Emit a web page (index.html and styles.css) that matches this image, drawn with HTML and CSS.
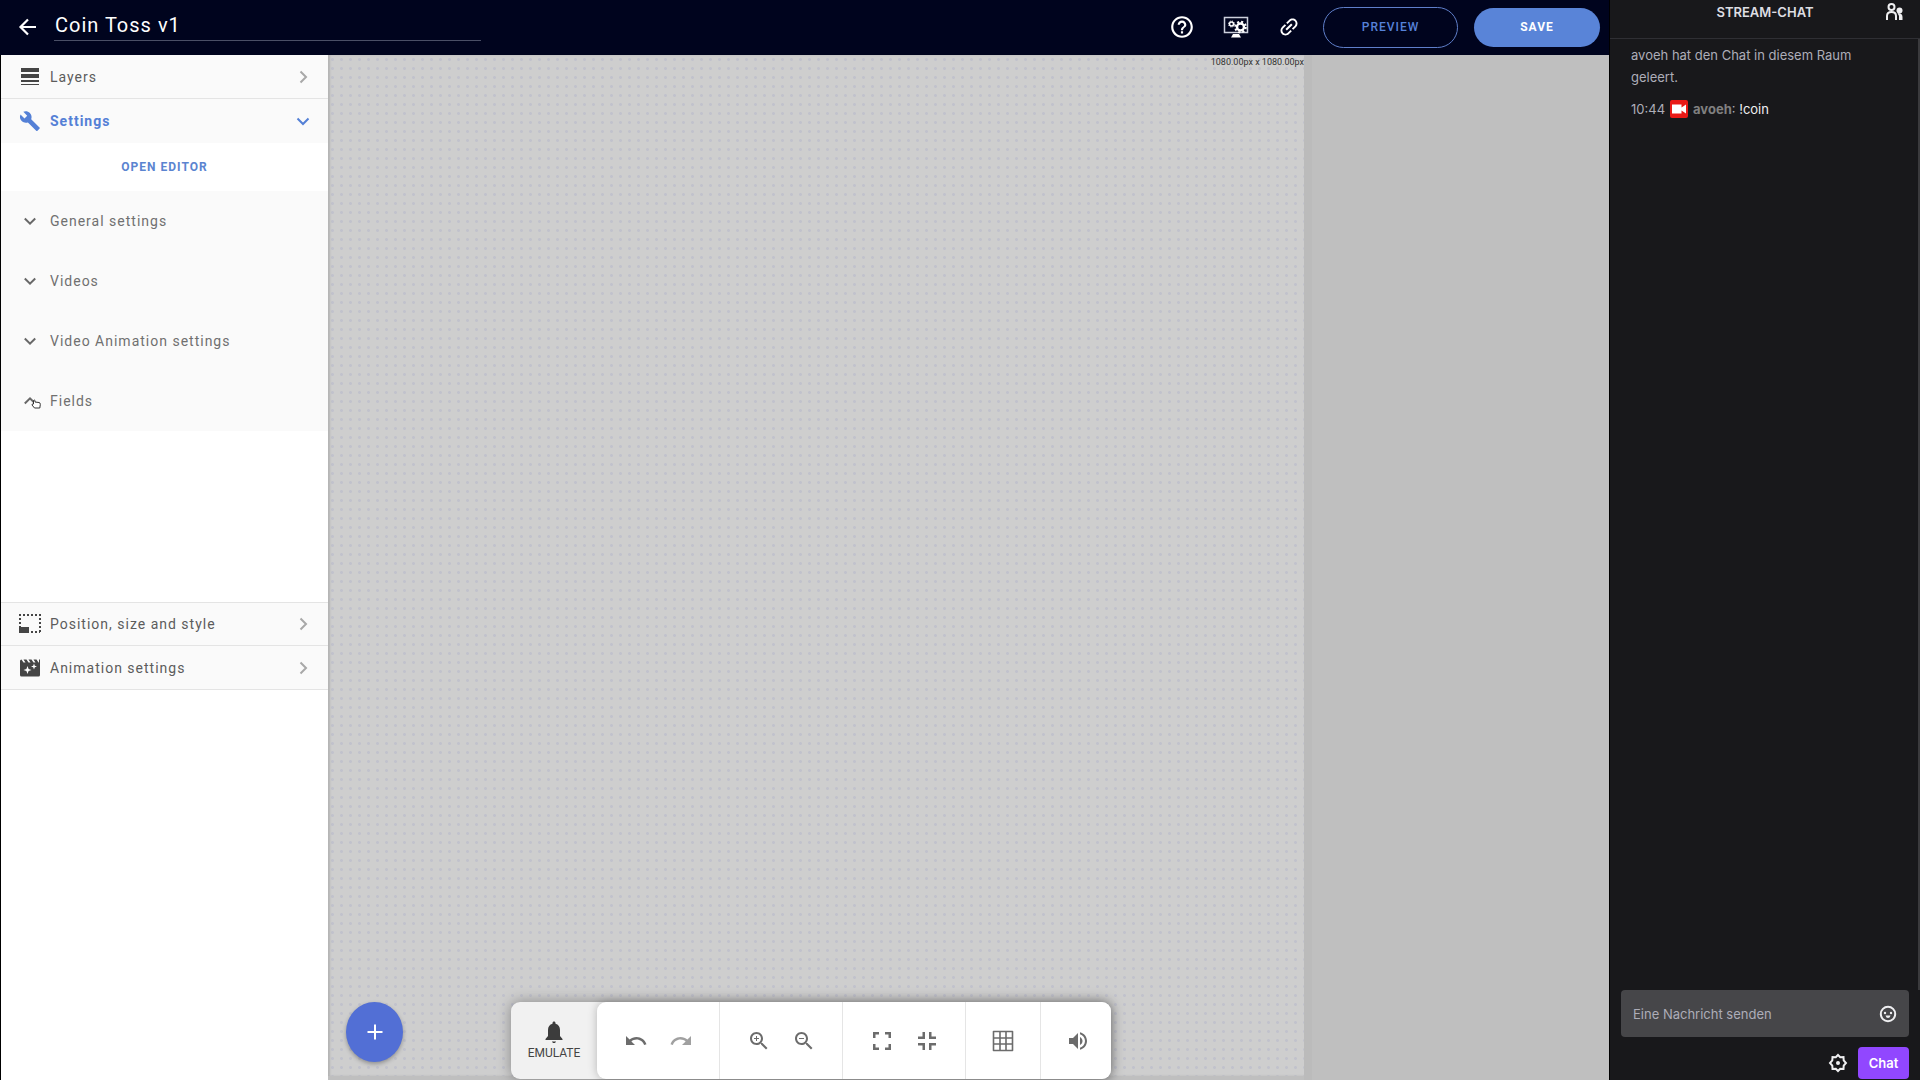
FILE: index.html
```html
<!DOCTYPE html>
<html lang="en">
<head>
    <meta charset="UTF-8">
    <meta name="viewport" content="width=device-width, initial-scale=1.0">
    <title>Coin Toss v1</title>
    <link rel="stylesheet" href="styles.css">
</head>
<body>
    <div class="editor">
        <header class="topbar">
            <button class="icon-btn back" aria-label="Back">
                <svg width="24" height="24" viewBox="0 0 24 24"><path d="M20 12H5M12 4.500L4.500 12l7.500 7.500" fill="none" stroke="#fff" stroke-width="2.200"/></svg>
            </button>
            <input class="title" type="text" aria-label="Overlay name" value="Coin Toss v1">
            <div class="top-icons">
                <button class="icon-btn" aria-label="Help">
                    <svg width="26" height="26" viewBox="0 0 24 24" fill="#fff"><path d="M11 18h2v-2h-2v2zm1-16C6.480 2 2 6.480 2 12s4.480 10 10 10 10-4.480 10-10S17.520 2 12 2zm0 18c-4.410 0-8-3.590-8-8s3.590-8 8-8 8 3.590 8 8-3.590 8-8 8zm0-14c-2.210 0-4 1.790-4 4h2c0-1.100.9-2 2-2s2 .9 2 2c0 2-3 1.750-3 5h2c0-2.250 3-2.500 3-5 0-2.210-1.790-4-4-4z"/></svg>
                </button>
                <button class="icon-btn" aria-label="Display settings">
                    <svg width="26" height="24" viewBox="0 0 26 24">
                        <path d="M1.500 2.500h23v15h-23z" fill="none" stroke="#ccd0dc" stroke-width="1.500"/>
                        <path d="M10 19h6l2 3.500H8z" fill="#fff"/>
                        <circle cx="8.500" cy="9" r="2" fill="none" stroke="#fff" stroke-width="1.500"/>
                        <circle cx="8.500" cy="9" r="3" fill="none" stroke="#fff" stroke-width="1" stroke-dasharray="1.200 1.160"/>
                        <circle cx="17.500" cy="12" r="3.500" fill="none" stroke="#fff" stroke-width="2.400"/>
                        <circle cx="17.500" cy="12" r="5.300" fill="none" stroke="#fff" stroke-width="2" stroke-dasharray="2.100 2.060"/>
                    </svg>
                </button>
                <button class="icon-btn" aria-label="Copy link">
                    <svg width="24" height="24" viewBox="0 0 24 24" fill="#fff"><path transform="rotate(-45 12 12)" d="M3.900 12c0-1.710 1.390-3.100 3.100-3.100h4V7H7c-2.760 0-5 2.240-5 5s2.240 5 5 5h4v-1.900H7c-1.710 0-3.100-1.390-3.100-3.100zM8 13h8v-2H8v2zm9-6h-4v1.900h4c1.710 0 3.100 1.390 3.100 3.100s-1.390 3.100-3.100 3.100h-4V17h4c2.760 0 5-2.240 5-5s-2.240-5-5-5z"/></svg>
                </button>
            </div>
            <button class="pill preview">PREVIEW</button>
            <button class="pill save">SAVE</button>
        </header>

        <div class="workspace">
            <aside class="sidebar">
                <button class="row">
                    <svg class="row-icon" width="24" height="24" viewBox="0 0 24 24" fill="#454545"><path d="M3 3h18v4H3zM3 9h18v4H3zM3 15h18v2H3zM3 19h18v1H3z"/></svg>
                    <span>Layers</span>
                    <svg class="chevron" width="14" height="14" viewBox="0 0 14 14"><path d="M4.500 1.500L10 7l-5.500 5.500"/></svg>
                </button>
                <button class="row open">
                    <svg class="row-icon" width="24" height="24" viewBox="0 0 24 24" fill="#5480d6"><path d="M21.500 18.500l-8.300-8.300c.8-2.100.4-4.500-1.300-6.200C10.100 2.200 7.400 1.800 5.300 2.800L9.200 6.700 6.500 9.400 2.500 5.500c-1.100 2.100-.6 4.800 1.200 6.600 1.700 1.700 4.100 2.100 6.200 1.300l8.300 8.300c.4.400.9.400 1.300 0l2.100-2.100c.4-.3.400-.8-.1-1.100z"/></svg>
                    <span>Settings</span>
                    <svg class="chevron" width="14" height="14" viewBox="0 0 14 14"><path d="M1.500 4.500L7 10l5.500-5.500"/></svg>
                </button>
                <div class="settings-panel">
                    <button class="open-editor">OPEN EDITOR</button>
                    <div class="groups">
                        <button class="group">
                            <svg class="group-arrow" width="12" height="12" viewBox="0 0 12 12"><path d="M.8 3.500L6 8.700l5.200-5.200"/></svg>
                            <span>General settings</span>
                        </button>
                        <button class="group">
                            <svg class="group-arrow" width="12" height="12" viewBox="0 0 12 12"><path d="M.8 3.500L6 8.700l5.200-5.200"/></svg>
                            <span>Videos</span>
                        </button>
                        <button class="group">
                            <svg class="group-arrow" width="12" height="12" viewBox="0 0 12 12"><path d="M.8 3.500L6 8.700l5.200-5.200"/></svg>
                            <span>Video Animation settings</span>
                        </button>
                        <button class="group">
                            <svg class="group-arrow" width="12" height="12" viewBox="0 0 12 12"><path d="M.8 8.500L6 3.300l5.200 5.200"/></svg>
                            <span>Fields</span>
                            <svg class="cursor" width="10" height="10" viewBox="0 0 10 10"><path d="M2.500 5V1.500Q3.200.5 4 1.500V3l4 .5q1.500.3 1.300 2L8.800 9H3.500L1 6q0-1.500 1.500-1z" fill="#fff" stroke="#333" stroke-width="1"/></svg>
                        </button>
                    </div>
                </div>
                <button class="row divided">
                    <svg class="row-icon" width="24" height="24" viewBox="0 0 24 24"><path d="M1 3h22M22 6v15M2 6v9M13 20h9" fill="none" stroke="#454545" stroke-width="2" stroke-dasharray="2 2"/><path d="M1 15h10v6H1z" fill="#454545"/></svg>
                    <span>Position, size and style</span>
                    <svg class="chevron" width="14" height="14" viewBox="0 0 14 14"><path d="M4.500 1.500L10 7l-5.500 5.500"/></svg>
                </button>
                <button class="row">
                    <svg class="row-icon" width="24" height="24" viewBox="0 0 24 24"><path d="M2 5q0-1.500 1.500-1.500l2 3h2l-2-3h3l2 3h2l-2-3h3l2 3h2l-2-3h3l2 3h.5V3.500h1V19q0 1.500-1.500 1.500h-17Q2 20.500 2 19z" fill="#454545"/><path d="M9.500 10l1.100 2.900 2.900 1.100-2.900 1.100L9.500 18l-1.100-2.900L5.500 14l2.900-1.100zM16 7.500l.8 2.200 2.200.8-2.200.8-.8 2.200-.8-2.200-2.200-.8 2.200-.8z" fill="#fff"/></svg>
                    <span>Animation settings</span>
                    <svg class="chevron" width="14" height="14" viewBox="0 0 14 14"><path d="M4.500 1.500L10 7l-5.500 5.500"/></svg>
                </button>
            </aside>

            <main class="stage">
                <div class="canvas"><span class="size">1080.00px x 1080.00px</span></div>
                <div class="gutter"></div>
                <button class="add" aria-label="Add">
                    <svg width="20" height="20" viewBox="0 0 20 20"><path d="M10 2.500v15M2.500 10h15" stroke="#fff" stroke-width="2"/></svg>
                </button>
                <div class="toolbar">
                    <button class="emulate">
                        <svg width="24" height="24" viewBox="0 0 24 24" fill="#3c3c3c"><path d="M12 22c1.100 0 2-.7 2-1.500h-4c0 .8.900 1.500 2 1.500zM18 15V9c0-3.100-1.600-5.600-4.500-6.300V2c0-.8-.7-1.500-1.500-1.500s-1.500.7-1.500 1.500v.7C7.600 3.400 6 5.900 6 9v6l-2.500 3v1h17v-1z"/></svg>
                        <span>EMULATE</span>
                    </button>
                    <div class="tools">
                        <div class="tool-group">
                            <button class="tool" aria-label="Undo"><svg viewBox="0 0 24 24"><path d="M12.500 8c-2.650 0-5.050.99-6.900 2.600L2 7v9h9l-3.620-3.620c1.390-1.160 3.160-1.880 5.120-1.880 3.540 0 6.550 2.310 7.600 5.500l2.370-.78C21.080 11.030 17.150 8 12.500 8z"/></svg></button>
                            <button class="tool muted" aria-label="Redo"><svg viewBox="0 0 24 24"><path d="M18.400 10.600C16.550 8.990 14.150 8 11.500 8c-4.650 0-8.580 3.030-9.960 7.220L3.900 16c1.050-3.190 4.050-5.500 7.600-5.500 1.950 0 3.730.72 5.120 1.880L13 16h9V7l-3.600 3.600z"/></svg></button>
                        </div>
                        <div class="tool-group">
                            <button class="tool" aria-label="Zoom in"><svg viewBox="0 0 24 24"><path d="M15.500 14h-.79l-.28-.27C15.410 12.590 16 11.110 16 9.500 16 5.910 13.090 3 9.500 3S3 5.910 3 9.500 5.910 16 9.500 16c1.610 0 3.090-.59 4.230-1.570l.27.28v.79l5 4.990L20.490 19l-4.990-5zm-6 0C7.010 14 5 11.990 5 9.500S7.010 5 9.500 5 14 7.010 14 9.500 11.990 14 9.500 14zm2.500-4h-2v2H9v-2H7V9h2V7h1v2h2v1z"/></svg></button>
                            <button class="tool" aria-label="Zoom out"><svg viewBox="0 0 24 24"><path d="M15.500 14h-.79l-.28-.27C15.410 12.590 16 11.110 16 9.500 16 5.910 13.090 3 9.500 3S3 5.910 3 9.500 5.910 16 9.500 16c1.610 0 3.090-.59 4.230-1.570l.27.28v.79l5 4.990L20.490 19l-4.990-5zm-6 0C7.010 14 5 11.990 5 9.500S7.010 5 9.500 5 14 7.010 14 9.500 11.990 14 9.500 14zM7 9h5v1H7z"/></svg></button>
                        </div>
                        <div class="tool-group">
                            <button class="tool" aria-label="Fullscreen"><svg viewBox="0 0 24 24"><path d="M3 3h6v2.500H5.500V9H3zM15 3h6v6h-2.500V5.500H15zM3 15h2.500v3.500H9V21H3zM18.500 15H21v6h-6v-2.500h3.500z"/></svg></button>
                            <button class="tool" aria-label="Fit to screen"><svg viewBox="0 0 24 24"><path d="M7.500 3H10v7H3V7.500h4.500zM14 3h2.500v4.500H21V10h-7zM3 14h7v7H7.500v-4.500H3zM14 14h7v2.500h-4.500V21H14z"/></svg></button>
                        </div>
                        <div class="tool-group single">
                            <button class="tool" aria-label="Grid"><svg viewBox="0 0 24 24"><path d="M2.500 2.500h19v19h-19zM9 2.500v19M15 2.500v19M2.500 9h19M2.500 15h19" fill="none" stroke="#6c6c6c" stroke-width="1.600" stroke-linejoin="round"/></svg></button>
                        </div>
                        <div class="tool-group single last">
                            <button class="tool" aria-label="Sound"><svg viewBox="0 0 24 24"><path d="M3 9v6h4l5 5V4L7 9H3zm13.500 3c0-1.770-1.020-3.290-2.500-4.030v8.050c1.480-.73 2.500-2.250 2.500-4.020zM14 3.230v2.060c2.890.86 5 3.540 5 6.710s-2.110 5.850-5 6.710v2.060c4.010-.91 7-4.490 7-8.770s-2.990-7.860-7-8.770z"/></svg></button>
                        </div>
                    </div>
                </div>
            </main>
        </div>
    </div>

    <section class="chat">
        <header class="chat-header">
            <h2>STREAM-CHAT</h2>
            <button class="icon-btn" aria-label="Users">
                <svg width="20" height="20" viewBox="0 0 20 20"><circle cx="7.500" cy="5" r="3" fill="none" stroke="#efeff1" stroke-width="2"/><path d="M3 18v-4q0-4 4.500-4t4.500 4v4" fill="none" stroke="#efeff1" stroke-width="2"/><circle cx="15.500" cy="8.500" r="3" fill="#efeff1"/><path d="M13.500 11q5 0 5 4v3h-3.500v-4z" fill="#efeff1"/></svg>
            </button>
        </header>
        <div class="messages">
            <p class="notice">avoeh hat den Chat in diesem Raum geleert.</p>
            <p class="message">
                <time>10:44</time>
                <svg class="badge" width="18" height="18" viewBox="0 0 18 18"><rect width="18" height="18" rx="2" fill="#e91916"/><path d="M2 4.500h9.500v3L16 4.500v9l-4.500-3v3H2z" fill="#fff"/></svg>
                <span><b>avoeh</b>: <span class="text">!coin</span></span>
            </p>
        </div>
        <div class="composer">
            <div class="message-box">
                <input type="text" aria-label="Eine Nachricht senden" placeholder="Eine Nachricht senden">
                <button class="icon-btn" aria-label="Emotes">
                    <svg width="18" height="18" viewBox="0 0 18 18"><circle cx="9" cy="9" r="7.200" fill="none" stroke="#efeff1" stroke-width="2"/><circle cx="6" cy="8" r="1.200" fill="#efeff1"/><circle cx="12" cy="8" r="1.200" fill="#efeff1"/><path d="M6.500 10.500h5q-.5 2.500-2.500 2.500t-2.500-2.500z" fill="#efeff1"/></svg>
                </button>
            </div>
            <div class="chat-actions">
                <button class="icon-btn" aria-label="Chat settings">
                    <svg width="20" height="20" viewBox="0 0 20 20"><path d="M10 2l2.200 2.300 3.300-.2.200 3.200L18 10l-2.300 2.700-.2 3.200-3.300-.2L10 18l-2.200-2.300-3.300.2-.2-3.200L2 10l2.300-2.700.2-3.200 3.300.2z" fill="none" stroke="#efeff1" stroke-width="2"/><circle cx="10" cy="10" r="2" fill="#efeff1"/></svg>
                </button>
                <button class="send">Chat</button>
            </div>
        </div>
    </section>
</body>
</html>
```
FILE: styles.css
```css
* {
    box-sizing: border-box;
}
body {
    margin: 0;
    display: flex;
    height: 100vh;
    overflow: hidden;
    background: #000;
    font-family: Roboto, "Open Sans", sans-serif;
}
button, input {
    font: inherit;
    color: inherit;
    border: none;
    background: none;
    padding: 0;
    margin: 0;
}
button {
    cursor: pointer;
}
svg {
    display: block;
    flex-shrink: 0;
}
.icon-btn {
    display: flex;
    align-items: center;
    justify-content: center;
}

/* Editor */
.editor {
    flex: 1;
    display: flex;
    flex-direction: column;
    min-width: 0;
}
.topbar {
    height: 55px;
    display: flex;
    align-items: center;
    padding: 0 9px 1px 16px;
    background: #00041e;
    color: #fff;
}
.title {
    width: 427px;
    height: 32px;
    margin-left: 14px;
    margin-bottom: 4px;
    padding: 0 1px;
    border-bottom: 1px solid #4a4f66;
    font-size: 20px;
    letter-spacing: 1px;
}
.top-icons {
    display: flex;
    align-items: center;
    gap: 28px;
    margin-left: auto;
    margin-right: 22px;
}
.pill {
    border-radius: 21px;
    font-size: 12px;
    letter-spacing: 1px;
}
.preview {
    width: 135px;
    height: 41px;
    border: 1px solid #5f7fca;
    color: #5681d8;
    font-weight: 500;
}
.save {
    width: 126px;
    height: 39px;
    margin-left: 16px;
    background: #5984d8;
    font-weight: bold;
}
.workspace {
    flex: 1;
    display: flex;
    min-height: 0;
}

/* Sidebar */
.sidebar {
    width: 328px;
    display: flex;
    flex-direction: column;
    background: #fff;
    border-left: 1px solid #000;
    color: #5c5c5c;
    font-size: 14px;
    letter-spacing: 1px;
}
.row {
    height: 44px;
    display: flex;
    align-items: center;
    gap: 8px;
    padding: 0 18px 0 17px;
    background: #fafafa;
    border-bottom: 1px solid #e4e4e4;
    letter-spacing: inherit;
}
.divided {
    border-top: 1px solid #e4e4e4;
}
.chevron {
    margin-left: auto;
    fill: none;
    stroke: #a8a8a8;
    stroke-width: 2;
}
.open {
    color: #5480d6;
    font-weight: bold;
}
.open {
    border-bottom-color: #fafafa;
}
.open .chevron {
    stroke: #5480d6;
}
.settings-panel {
    height: 459px;
}
.open-editor {
    width: 100%;
    height: 48px;
    color: #5b84d0;
    font-size: 12px;
    font-weight: bold;
    letter-spacing: 1px;
}
.groups {
    background: #fafafa;
}
.group {
    position: relative;
    display: flex;
    align-items: center;
    gap: 14px;
    width: 100%;
    height: 60px;
    padding: 0 23px;
    color: #707070;
    letter-spacing: 1px;
}
.group-arrow {
    fill: none;
    stroke: #686868;
    stroke-width: 2;
}
.cursor {
    position: absolute;
    left: 30px;
    top: 28px;
}

/* Canvas */
.stage {
    position: relative;
    flex: 1;
    display: flex;
    background: #bfbfbf;
}
.canvas {
    flex: 976;
    margin-bottom: 4px;
    padding-top: 1px;
    background-color: #cecece;
    background-image: radial-gradient(circle, #c1c2cc 1px, transparent 2px);
    background-size: 9px 9px;
    box-shadow: inset 2px 0 2px #b4b4b4;
    text-align: right;
}
.gutter {
    flex: 305;
    box-shadow: inset 8px 0 #bbb;
}
.size {
    display: block;
    color: #333;
    font-size: 9px;
    line-height: 12px;
}
.add {
    position: absolute;
    left: 18px;
    bottom: 18px;
    width: 57px;
    height: 60px;
    display: flex;
    align-items: center;
    justify-content: center;
    border-radius: 50%;
    background: #526fd5;
    box-shadow: 0 2px 4px rgba(0, 0, 0, 0.3);
}
.toolbar {
    position: absolute;
    left: 183px;
    bottom: 1px;
    height: 77px;
    display: flex;
    border-radius: 9px;
    background: #f1f1f1;
    box-shadow: 0 0 14px rgba(0, 0, 0, 0.35);
}
.emulate {
    width: 86px;
    display: flex;
    flex-direction: column;
    align-items: center;
    justify-content: center;
    gap: 1px;
    color: #444;
    font-size: 12px;
}
.tools {
    display: flex;
    border-radius: 9px;
    background: #fff;
    box-shadow: 0 0 10px rgba(0, 0, 0, 0.25);
}
.tool-group {
    display: flex;
    align-items: center;
    justify-content: center;
    gap: 21px;
    width: 123px;
    border-right: 1px solid #e5e5e5;
}
.single {
    width: 75px;
}
.last {
    width: 70px;
    padding-left: 4px;
    border-right: none;
}
.tool svg {
    width: 24px;
    height: 24px;
    fill: #6c6c6c;
}
.muted svg {
    fill: #a0a0a0;
}

/* Chat */
.chat {
    width: 311px;
    display: flex;
    flex-direction: column;
    background: #18181b;
    border-left: 1px solid #000;
    color: #adadb8;
    font-family: Inter, sans-serif;
    font-size: 13px;
}
.chat-header {
    height: 39px;
    display: flex;
    align-items: flex-start;
    padding: 2px 16px 0 36px;
    border-bottom: 1px solid #2f2f34;
}
.chat-header h2 {
    flex: 1;
    margin: 0;
    color: #dedee3;
    font-size: 13px;
    line-height: 20px;
    font-weight: 600;
    text-align: center;
}
.messages {
    flex: 1;
    padding: 5px 20px 0 21px;
    border-right: 2px solid #3a3a3d;
    line-height: 22px;
}
.messages p {
    margin: 0 0 10px;
}
.message {
    display: flex;
    align-items: center;
    gap: 5px;
}
.message b {
    color: #808080;
}
.text {
    color: #efeff1;
}
.composer {
    padding: 0 11px 1px;
}
.message-box {
    height: 47px;
    display: flex;
    align-items: center;
    padding: 0 12px;
    border-radius: 4px;
    background: #464649;
}
.message-box input {
    flex: 1;
    min-width: 0;
}
.message-box input::placeholder {
    color: #adadb8;
}
.chat-actions {
    display: flex;
    justify-content: flex-end;
    align-items: center;
    gap: 10px;
    margin-top: 10px;
}
.send {
    width: 51px;
    height: 32px;
    border-radius: 4px;
    background: #9147ff;
    color: #fff;
    font-weight: 600;
}
```
